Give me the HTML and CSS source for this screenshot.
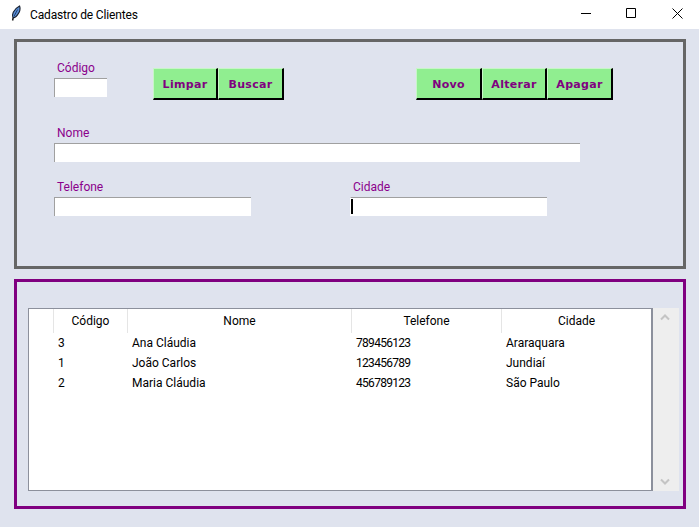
FILE: index.html
```html
<!DOCTYPE html>
<html lang="pt-BR">
<head>
    <meta charset="UTF-8">
    <title>Cadastro de Clientes</title>
    <link rel="stylesheet" href="styles.css">
</head>
<body>
    <div class="titlebar">
        <svg class="app-icon" width="16" height="20" viewBox="0 0 16 20">
            <path d="M3.2 13 L2.6 15.5" fill="none" stroke="#111" stroke-width="1.4"/>
            <path d="M3 13 C1.5 10 3 4.5 9.6 1 C10.6 3.5 9.8 7 8.4 8.5 C7.4 10.5 5.6 12.5 3 13 Z" fill="#5b8fd6" stroke="#1a2230" stroke-width="1.1"/>
            <path d="M4.2 11 L7.6 4.5" fill="none" stroke="#1f3f70" stroke-width="1"/>
        </svg>
        <span class="title">Cadastro de Clientes</span>
        <div class="window-btns">
            <svg width="11" height="11" viewBox="0 0 11 11"><path d="M1 5.5H11" stroke="#000" fill="none"/></svg>
            <svg width="11" height="11" viewBox="0 0 11 11"><path d="M.5 .5H9.5V9.5H.5Z" stroke="#000" fill="none"/></svg>
            <svg width="11" height="11" viewBox="0 0 11 11"><path d="M.5 .5L10.5 10.5M10.5 .5L.5 10.5" stroke="#000" fill="none"/></svg>
        </div>
    </div>

    <div class="content">
        <form class="panel panel-form">
            <div class="row row-top">
                <div class="field">
                    <label for="codigo">Código</label>
                    <input type="text" id="codigo" class="entry entry-codigo">
                </div>
                <div class="btn-group group-busca">
                    <button type="button" class="btn btn-estreito">Limpar</button>
                    <button type="button" class="btn">Buscar</button>
                </div>
                <div class="btn-group group-acoes">
                    <button type="button" class="btn">Novo</button>
                    <button type="button" class="btn btn-estreito">Alterar</button>
                    <button type="button" class="btn">Apagar</button>
                </div>
            </div>
            <div class="row row-nome">
                <div class="field">
                    <label for="nome">Nome</label>
                    <input type="text" id="nome" class="entry entry-nome">
                </div>
            </div>
            <div class="row row-contato">
                <div class="field">
                    <label for="telefone">Telefone</label>
                    <input type="text" id="telefone" class="entry entry-medio">
                </div>
                <div class="field field-cidade">
                    <label for="cidade">Cidade</label>
                    <input type="text" id="cidade" class="entry entry-medio entry-foco">
                </div>
            </div>
        </form>

        <div class="panel panel-lista">
            <div class="lista">
                <table class="tabela">
                    <colgroup>
                        <col class="col-arvore">
                        <col class="col-codigo">
                        <col class="col-nome">
                        <col class="col-telefone">
                        <col>
                    </colgroup>
                    <thead>
                        <tr><th></th><th>Código</th><th>Nome</th><th>Telefone</th><th>Cidade</th></tr>
                    </thead>
                    <tbody>
                        <tr><td></td><td>3</td><td>Ana Cláudia</td><td class="num">789456123</td><td>Araraquara</td></tr>
                        <tr><td></td><td>1</td><td>João Carlos</td><td class="num">123456789</td><td>Jundiaí</td></tr>
                        <tr><td></td><td>2</td><td>Maria Cláudia</td><td class="num">456789123</td><td>São Paulo</td></tr>
                    </tbody>
                </table>
            </div>
            <div class="scrollbar">
                <svg width="10" height="7" viewBox="0 0 10 7"><path d="M1 5.5L5 1.5L9 5.5" stroke="#c4c4c4" stroke-width="2" fill="none"/></svg>
                <svg width="10" height="7" viewBox="0 0 10 7"><path d="M1 1.5L5 5.5L9 1.5" stroke="#c4c4c4" stroke-width="2" fill="none"/></svg>
            </div>
        </div>
    </div>
</body>
</html>
```

FILE: styles.css
```css
html, body {
    margin: 0;
    height: 527px;
    overflow: hidden;
}
body {
    font-family: Roboto, sans-serif;
    font-size: 12px;
    background-color: #dfe3ee;
}
.titlebar {
    display: flex;
    align-items: center;
    height: 29px;
    padding-left: 10px;
    background-color: #fff;
    color: #000;
}
.app-icon {
    margin-right: 4px;
}
.title {
    flex: 1;
    letter-spacing: -0.15px;
}
.window-btns {
    display: flex;
    gap: 35px;
    margin-bottom: 2px;
    padding-right: 16px;
}
.content {
    padding: 10px 13px 0 14px;
}
.panel {
    box-sizing: border-box;
    border: 3px solid #666;
}
.panel-form {
    height: 230px;
    padding: 18px 0 0 37px;
}
.panel-lista {
    display: flex;
    height: 230px;
    margin-top: 10px;
    padding: 26px 0 0 11px;
    border-color: #800080;
}
.row {
    display: flex;
    align-items: flex-start;
}
.row-nome {
    margin-top: 25px;
}
.row-contato {
    margin-top: 17px;
}
.field label {
    display: block;
    height: 18px;
    padding-left: 3px;
    color: #8b008b;
    line-height: 16px;
}
.entry {
    display: block;
    box-sizing: border-box;
    height: 19px;
    padding: 0;
    border: none;
    border-top: 1px solid #a0a0a0;
    border-left: 1px solid #a0a0a0;
    background-color: #fff;
    outline: none;
}
.entry-codigo {
    width: 53px;
}
.entry-nome {
    width: 526px;
}
.entry-medio {
    width: 197px;
}
.entry-foco {
    border-left-color: #fff;
    background: linear-gradient(#000, #000) no-repeat 0 1px / 2px 15px, #fff;
}
.field-cidade {
    margin-left: 99px;
}
.btn-group {
    display: flex;
    margin-top: 8px;
}
.group-busca {
    margin-left: 46px;
}
.group-acoes {
    margin-left: 132px;
}
.btn {
    box-sizing: border-box;
    width: 66px;
    height: 32px;
    padding: 2px 0 0;
    border: 1px solid #000;
    border-top-color: #c8f6c8;
    border-left-color: #c8f6c8;
    border-bottom-width: 2px;
    border-right-width: 2px;
    background-color: #90ee90;
    color: #800080;
    font-family: "DejaVu Sans", sans-serif;
    font-size: 11px;
    font-weight: bold;
    letter-spacing: 0.3px;
}
.btn-estreito {
    width: 65px;
}
.lista {
    box-sizing: border-box;
    width: 625px;
    height: 183px;
    border: 1px solid #8c909c;
    border-right-width: 2px;
    background-color: #fff;
}
.tabela {
    width: 100%;
    table-layout: fixed;
    border-collapse: separate;
    border-spacing: 0;
    color: #000;
}
.col-arvore { width: 25px; }
.col-codigo { width: 74px; }
.col-nome { width: 224px; }
.col-telefone { width: 150px; }
.tabela th {
    height: 24px;
    padding: 0;
    border-right: 1px solid #e5e5e5;
    font-weight: normal;
}
.tabela th:last-child {
    border-right: none;
}
.tabela td {
    height: 20px;
    padding: 0 0 0 4px;
}
.tabela .num {
    letter-spacing: -0.7px;
}
.scrollbar {
    display: flex;
    flex-direction: column;
    justify-content: space-between;
    align-items: center;
    box-sizing: border-box;
    width: 26px;
    height: 183px;
    padding: 6px 2px 6px 0;
    background-color: #eee;
}
```
